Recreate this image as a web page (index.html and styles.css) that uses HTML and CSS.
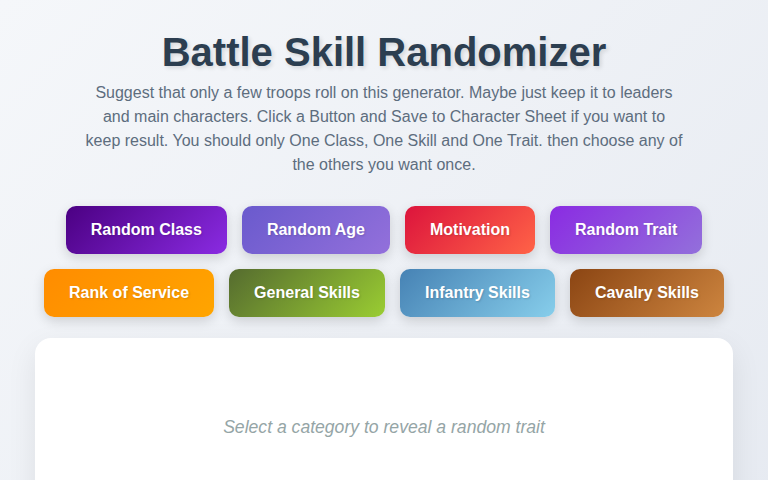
FILE: index.html
```html
<!DOCTYPE html>
<html lang="en">
<head>
<meta charset="utf-8">
<title>Battle Skill Randomizer</title>
<link rel="stylesheet" href="styles.css">
</head>
<body>
<div class="container">
  <header class="header">
    <h1 class="title">Battle Skill Randomizer</h1>
    <p class="intro">Suggest that only a few troops roll on this generator. Maybe just keep it to leaders and main characters. Click a Button and Save to Character Sheet if you want to keep result. You should only One Class, One Skill and One Trait. then choose any of the others you want once.</p>
  </header>
  <div class="buttons">
    <button class="btn btn-class">Random Class</button>
    <button class="btn btn-age">Random Age</button>
    <button class="btn btn-motivation">Motivation</button>
    <button class="btn btn-trait">Random Trait</button>
    <button class="btn btn-rank">Rank of Service</button>
    <button class="btn btn-general">General Skills</button>
    <button class="btn btn-infantry">Infantry Skills</button>
    <button class="btn btn-cavalry">Cavalry Skills</button>
  </div>
  <div class="result">
    <p class="placeholder">Select a category to reveal a random trait</p>
  </div>
</div>
</body>
</html>
```
FILE: styles.css
```css
* { box-sizing: border-box; }
html, body { margin: 0; padding: 0; }
body {
  font-family: "Liberation Sans", Arial, sans-serif;
  background: linear-gradient(135deg, #f5f7fa 0%, #e6eaf1 100%);
  min-height: 100vh;
  color: #2c3e50;
}
.container {
  max-width: 700px;
  margin: 0 auto;
  padding: 29px 0 0;
}
.header { text-align: center; }
.title {
  margin: 0;
  font-size: 40px;
  font-weight: bold;
  color: #2c3e50;
  line-height: 46px;
  text-shadow: 2px 2px 4px rgba(0,0,0,0.12);
}
.intro {
  max-width: 600px;
  margin: 6px auto 0;
  font-size: 16px;
  line-height: 24px;
  color: #5d6d7e;
}
.buttons {
  display: flex;
  flex-wrap: wrap;
  justify-content: center;
  gap: 15px;
  margin: 29px -20px 0;
}
.btn {
  font-family: "Liberation Sans", Arial, sans-serif;
  font-size: 16px;
  font-weight: bold;
  line-height: 18px;
  color: #fff;
  border: none;
  border-radius: 10px;
  padding: 15px 25px;
  box-shadow: 0 4px 12px rgba(0,0,0,0.15);
  text-shadow: 1px 1px 2px rgba(0,0,0,0.15);
  cursor: pointer;
}
.btn-class { background: linear-gradient(135deg, #4b0082, #8a2be2); }
.btn-age { background: linear-gradient(135deg, #6a5acd, #9370db); }
.btn-motivation { background: linear-gradient(135deg, #dc143c, #ff6347); }
.btn-trait { background: linear-gradient(135deg, #8a2be2, #9370db); }
.btn-rank { background: linear-gradient(135deg, #ff8c00, #ffa500); }
.btn-general { background: linear-gradient(135deg, #556b2f, #9acd32); }
.btn-infantry { background: linear-gradient(135deg, #4682b4, #87ceeb); }
.btn-cavalry { background: linear-gradient(135deg, #8b4513, #cd853f); }
.result {
  margin: 21px 1px 0;
  background: #fff;
  border-radius: 16px;
  box-shadow: 0 10px 30px rgba(0,0,0,0.08);
  padding: 79px 30px;
  min-height: 200px;
  text-align: center;
}
.placeholder {
  margin: 0;
  font-size: 17.6px;
  line-height: 21px;
  font-style: italic;
  color: #95a5a6;
}
```
